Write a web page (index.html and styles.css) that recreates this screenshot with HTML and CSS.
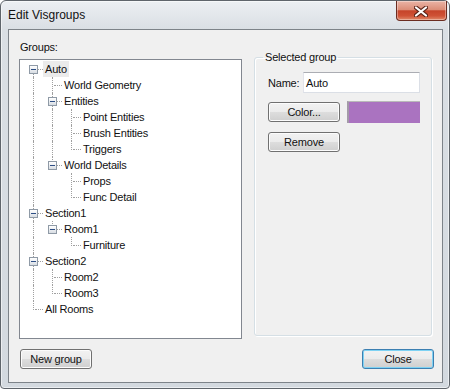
FILE: index.html
```html
<!DOCTYPE html>
<html lang="en">
<head>
    <meta charset="UTF-8">
    <meta name="viewport" content="width=device-width, initial-scale=1.0">
    <title>Edit Visgroups</title>
    <link rel="stylesheet" href="styles.css">
</head>
<body>
    <div class="window">
        <div class="titlebar">
            <span class="title">Edit Visgroups</span>
            <a href="#" class="close-x">
                <svg width="14" height="11" viewBox="0 0 14 11">
                    <path d="M2 1.5 L12 9.5 M12 1.5 L2 9.5" stroke="#5b2418" stroke-width="4.2" stroke-linecap="round"/>
                    <path d="M2 1.5 L12 9.5 M12 1.5 L2 9.5" stroke="#fff" stroke-width="2.2" stroke-linecap="round"/>
                </svg>
            </a>
        </div>
        <div class="client">
            <div class="main">
                <div class="groups">
                    <div class="groups-label">Groups:</div>
                    <div class="tree">
                        <div class="row"><span class="cell first"><i class="box"></i></span><span class="label sel">Auto</span></div>
                        <div class="row"><span class="cell line"></span><span class="cell tee"></span><span class="label">World Geometry</span></div>
                        <div class="row"><span class="cell line"></span><span class="cell tee"><i class="box"></i></span><span class="label">Entities</span></div>
                        <div class="row"><span class="cell line"></span><span class="cell line"></span><span class="cell tee"></span><span class="label">Point Entities</span></div>
                        <div class="row"><span class="cell line"></span><span class="cell line"></span><span class="cell tee"></span><span class="label">Brush Entities</span></div>
                        <div class="row"><span class="cell line"></span><span class="cell line"></span><span class="cell end"></span><span class="label">Triggers</span></div>
                        <div class="row"><span class="cell line"></span><span class="cell end"><i class="box"></i></span><span class="label">World Details</span></div>
                        <div class="row"><span class="cell line"></span><span class="cell"></span><span class="cell tee"></span><span class="label">Props</span></div>
                        <div class="row"><span class="cell line"></span><span class="cell"></span><span class="cell end"></span><span class="label">Func Detail</span></div>
                        <div class="row"><span class="cell tee"><i class="box"></i></span><span class="label">Section1</span></div>
                        <div class="row"><span class="cell line"></span><span class="cell end"><i class="box"></i></span><span class="label">Room1</span></div>
                        <div class="row"><span class="cell line"></span><span class="cell"></span><span class="cell end"></span><span class="label">Furniture</span></div>
                        <div class="row"><span class="cell tee"><i class="box"></i></span><span class="label">Section2</span></div>
                        <div class="row"><span class="cell line"></span><span class="cell tee"></span><span class="label">Room2</span></div>
                        <div class="row"><span class="cell line"></span><span class="cell end"></span><span class="label">Room3</span></div>
                        <div class="row"><span class="cell end"></span><span class="label">All Rooms</span></div>
                    </div>
                </div>
                <fieldset class="selected">
                    <legend>Selected group</legend>
                    <div class="name-row">
                        <label class="name-label">Name:</label>
                        <div class="name-input">Auto</div>
                    </div>
                    <div class="color-row">
                        <a href="#" class="btn">Color...</a>
                        <div class="swatch"></div>
                    </div>
                    <div class="remove-row">
                        <a href="#" class="btn">Remove</a>
                    </div>
                </fieldset>
            </div>
            <div class="buttons">
                <a href="#" class="btn new-group">New group</a>
                <a href="#" class="btn default close-btn">Close</a>
            </div>
        </div>
    </div>
</body>
</html>
```

FILE: styles.css
```css
* {
    box-sizing: border-box;
}
body {
    margin: 0;
    font-family: "Liberation Sans", Arial, sans-serif;
    font-size: 11px;
    letter-spacing: -0.2px;
    color: #111;
    background: #fff;
}
.window {
    width: 450px;
    height: 389px;
    border: 1px solid #5f656b;
    border-radius: 6px 6px 4px 4px;
    background: linear-gradient(#eceff2, #dadfe4 28px, #d3d9df);
    box-shadow: inset 0 0 0 1px rgba(255, 255, 255, 0.55);
    display: flex;
    flex-direction: column;
}
.titlebar {
    height: 28px;
    display: flex;
    align-items: flex-start;
    padding-left: 7px;
}
.title {
    font-size: 12px;
    letter-spacing: 0;
    line-height: 28px;
}
.close-x {
    margin-left: auto;
    margin-right: 2px;
    width: 51px;
    height: 20px;
    border: 1px solid #6b2c20;
    border-top: none;
    border-radius: 0 0 4px 4px;
    background: linear-gradient(#eab4a6 0%, #dc8e78 45%, #c6442a 52%, #cf5236 78%, #e08a6a 100%);
    box-shadow: inset 0 0 0 1px rgba(255, 255, 255, 0.35);
    display: flex;
    align-items: center;
    justify-content: center;
}
.close-x svg {
    margin-left: -2px;
    margin-top: 2px;
}
.client {
    flex: 1;
    margin: 0 6px 5px 7px;
    border: 1px solid #7d8389;
    background: #f0f0f0;
    padding: 11px 9px 12px 10px;
    display: flex;
    flex-direction: column;
}
.main {
    height: 298px;
    display: flex;
    gap: 12px;
}
.groups {
    width: 223px;
    display: flex;
    flex-direction: column;
}
.groups-label {
    height: 13px;
    line-height: 13px;
    margin-bottom: 5px;
    padding-left: 1px;
}
.tree {
    height: 280px;
    border: 1px solid #828790;
    background: #fff;
    padding: 1px 0 0 4px;
}
.row {
    height: 16px;
    display: flex;
}
.cell {
    width: 19px;
    height: 16px;
    flex: none;
    position: relative;
}
.cell::before,
.cell::after {
    position: absolute;
}
.cell.line::before,
.cell.tee::before {
    content: '';
    left: 9px;
    top: 0;
    height: 16px;
    border-left: 1px dotted #a0a0a0;
}
.cell.end::before {
    content: '';
    left: 9px;
    top: 0;
    height: 9px;
    border-left: 1px dotted #a0a0a0;
}
.cell.first::before {
    content: '';
    left: 9px;
    top: 8px;
    height: 8px;
    border-left: 1px dotted #a0a0a0;
}
.cell.tee::after,
.cell.end::after,
.cell.first::after {
    content: '';
    left: 11px;
    top: 8px;
    width: 8px;
    border-top: 1px dotted #a0a0a0;
}
.box {
    position: absolute;
    z-index: 1;
    left: 5px;
    top: 4px;
    width: 9px;
    height: 9px;
    border: 1px solid #8f9aa6;
    background: linear-gradient(#2d4e85, #2d4e85) center / 5px 1px no-repeat, linear-gradient(#ffffff, #d8dde3);
}
.label {
    line-height: 16px;
    padding: 0 2px;
    white-space: nowrap;
}
.label.sel {
    background: #ebebeb;
}
.selected {
    width: 178px;
    margin: 10px 0 3px;
    padding: 0 11px 0 13px;
    border: 1px solid #d5dfe5;
    border-radius: 3px;
    box-shadow: inset 1px 1px 0 #fff, 1px 1px 0 #fff;
    min-width: 0;
}
.selected legend {
    margin-left: -5px;
    padding: 0 2px;
    line-height: 13px;
}
.name-row {
    margin-top: 8px;
    display: flex;
    align-items: center;
}
.name-label {
    width: 35px;
}
.name-input {
    width: 117px;
    height: 21px;
    border: 1px solid #dbdfe6;
    border-top-color: #abadb3;
    border-left-color: #e2e3ea;
    background: #fff;
    padding: 3px 2px 0;
    line-height: 14px;
}
.color-row {
    margin-top: 8px;
    height: 22px;
    display: flex;
    align-items: center;
    gap: 7px;
}
.swatch {
    width: 73px;
    height: 22px;
    background: #aa73c0;
    border-top: 1px solid #b9b9b9;
    border-left: 2px solid #a39aa8;
}
.remove-row {
    margin-top: 9px;
}
.btn {
    width: 72px;
    height: 20px;
    display: flex;
    align-items: center;
    justify-content: center;
    color: #111;
    text-decoration: none;
    border: 1px solid #707070;
    border-radius: 3px;
    background: linear-gradient(#f2f2f2 0%, #ebebeb 50%, #dddddd 51%, #cfcfcf 100%);
    box-shadow: inset 0 0 0 1px #fcfcfc;
}
.btn.default {
    border-color: #3c7fb1;
    box-shadow: inset 0 0 0 1px #7ed2f3;
}
.buttons {
    margin-top: 10px;
    height: 20px;
    display: flex;
    justify-content: space-between;
}
.new-group {
    margin-left: 1px;
}
.close-btn {
    margin-right: -1px;
}
```
